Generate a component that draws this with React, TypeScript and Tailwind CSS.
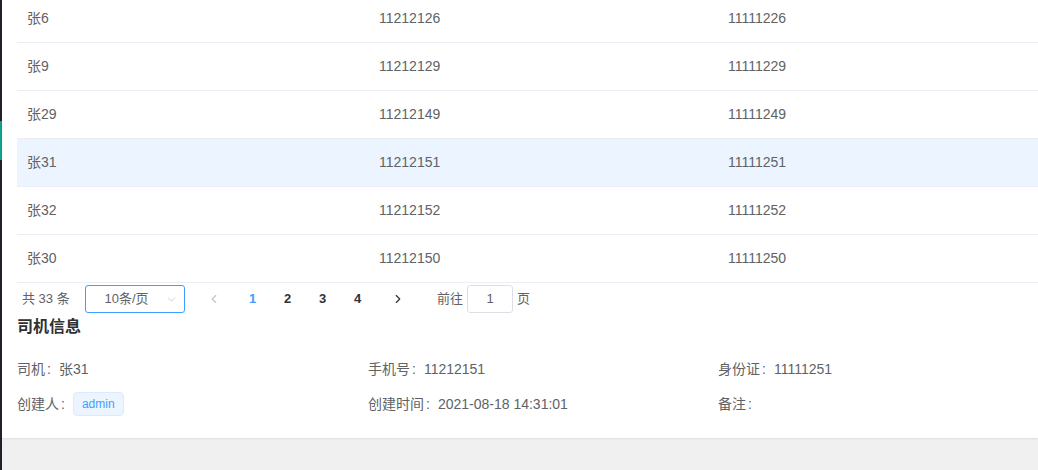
import { ChevronDown, ChevronLeft, ChevronRight } from "lucide-react";

interface DriverRow {
  name: string;
  phone: string;
  idCard: string;
}

const ROWS: DriverRow[] = [
  { name: "张6", phone: "11212126", idCard: "11111226" },
  { name: "张9", phone: "11212129", idCard: "11111229" },
  { name: "张29", phone: "11212149", idCard: "11111249" },
  { name: "张31", phone: "11212151", idCard: "11111251" },
  { name: "张32", phone: "11212152", idCard: "11111252" },
  { name: "张30", phone: "11212150", idCard: "11111250" },
];

const ACTIVE = "张31";

function Label({ text }: { text: string }) {
  return (
    <span className="text-[#606266]">
      {text}
      <span className="ml-[2px] mr-[8px]">:</span>
    </span>
  );
}

export default function App() {
  return (
    <div
      className="flex h-[470px] w-[1038px] overflow-hidden bg-[#f0f0f0]"
      style={{ fontFamily: '"Liberation Sans", "Noto Sans CJK SC", sans-serif' }}
    >
      {/* sidebar edge */}
      <div className="flex w-[2px] flex-col bg-[#1f2329]">
        <div className="h-[121px]" />
        <div className="h-[39px] bg-[#13a08c]" />
      </div>

      <div className="flex flex-1 flex-col">
        <div className="bg-white pb-[10px] pl-[15px] shadow-[0_1px_2px_rgba(0,0,0,0.08)]">
          {/* Table */}
          <div className="-mt-[5px] text-[14px] text-[#606266]">
            {ROWS.map((r) => (
              <div
                key={r.name}
                className={`flex h-[48px] items-center border-b border-[#ebeef5] ${
                  r.name === ACTIVE ? "bg-[#ecf5ff]" : ""
                }`}
              >
                <div className="w-[352px] shrink-0 px-[10px]">{r.name}</div>
                <div className="w-[349px] shrink-0 px-[10px]">{r.phone}</div>
                <div className="flex-1 px-[10px]">{r.idCard}</div>
              </div>
            ))}
          </div>

          {/* Pagination */}
          <div className="flex h-[32px] items-start pl-[5px] pt-[2px] text-[13px] text-[#606266]">
            <span className="w-[63px] leading-[28px]">共 33 条</span>
            <div className="relative flex h-[28px] w-[100px] items-center justify-center rounded-[3px] border border-[#409eff] pl-[8px] pr-[25px]">
              10条/页
              <ChevronDown className="absolute right-[6px] h-[13px] w-[13px] text-[#c0c4cc]" strokeWidth={1.5} />
            </div>
            <div className="ml-[11px] flex h-[28px] w-[35px] items-center justify-center text-[#c0c4cc]">
              <ChevronLeft className="h-[14px] w-[14px]" strokeWidth={2} />
            </div>
            <div className="ml-[4px] flex font-bold leading-[28px] text-[#303133]">
              {[1, 2, 3, 4].map((p) => (
                <span
                  key={p}
                  className={`w-[35px] text-center ${p === 1 ? "text-[#409eff]" : ""}`}
                >
                  {p}
                </span>
              ))}
            </div>
            <div className="ml-[5px] flex h-[28px] w-[35px] items-center justify-center text-[#303133]">
              <ChevronRight className="h-[14px] w-[14px]" strokeWidth={2} />
            </div>
            <span className="ml-[22px] leading-[28px]">前往</span>
            <div className="ml-[4px] flex h-[28px] w-[46px] items-center justify-center rounded-[3px] border border-[#dcdfe6]">
              1
            </div>
            <span className="ml-[4px] leading-[28px]">页</span>
          </div>

          {/* Descriptions */}
          <div className="text-[16px] font-bold leading-[24px] text-[#303133]">司机信息</div>
          <div className="mt-[20px] text-[14px] leading-[21px] text-[#606266]">
            <div className="flex pb-[12px]">
              <div className="w-[351px]">
                <Label text="司机" />
                张31
              </div>
              <div className="w-[350px]">
                <Label text="手机号" />
                11212151
              </div>
              <div className="flex-1">
                <Label text="身份证" />
                11111251
              </div>
            </div>
            <div className="flex items-center pb-[12px]">
              <div className="flex w-[351px] items-center">
                <Label text="创建人" />
                <span className="inline-flex h-[24px] items-center rounded-[4px] border border-[#d9ecff] bg-[#ecf5ff] px-[8px] text-[12px] text-[#409eff]">
                  admin
                </span>
              </div>
              <div className="w-[350px]">
                <Label text="创建时间" />
                2021-08-18 14:31:01
              </div>
              <div className="flex-1">
                <Label text="备注" />
              </div>
            </div>
          </div>
        </div>
      </div>
    </div>
  );
}
